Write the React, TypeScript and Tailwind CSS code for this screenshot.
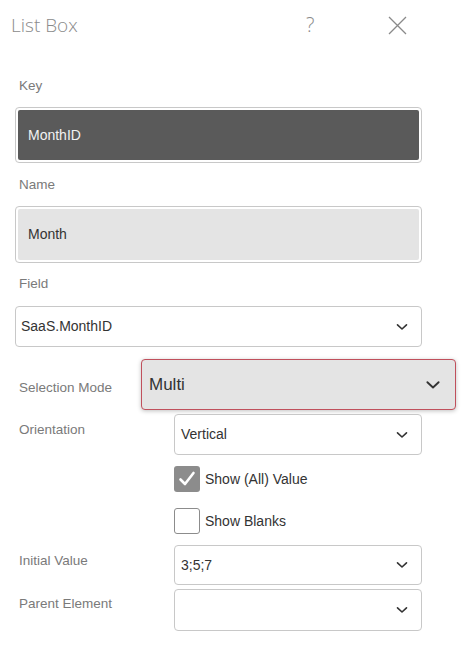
import React from 'react';

const Chevron = ({ big = false }: { big?: boolean }) => (
  <svg
    width={big ? 16 : 12}
    height={big ? 10 : 8}
    viewBox="0 0 12 8"
    fill="none"
    stroke="#333333"
    strokeWidth={big ? 1.5 : 1.6}
    strokeLinecap="round"
    strokeLinejoin="round"
  >
    <path d="M1.5 1.8 L6 6 L10.5 1.8" />
  </svg>
);

const Label = ({ children, className = '' }: { children: React.ReactNode; className?: string }) => (
  <div className={`pl-[4px] text-[13.5px] leading-[16px] text-[#7a7a7a] ${className}`}>{children}</div>
);

const Select = ({ value, className = '' }: { value: string; className?: string }) => (
  <div
    className={`flex items-center justify-between border border-[#c8c8c8] rounded-[4px] bg-white pr-[13px] text-[14px] text-[#333333] ${className}`}
  >
    <span>{value}</span>
    <Chevron />
  </div>
);

const Checkbox = ({ checked, label }: { checked: boolean; label: string }) => (
  <div className="flex items-center gap-[5px] pl-[159px]">
    {checked ? (
      <div className="w-[26px] h-[26px] rounded-[3px] bg-[#8c8c8c] flex items-center justify-center">
        <svg width="18" height="16" viewBox="0 0 18 16" fill="none">
          <path d="M2.5 8.5 L7 13 L15.5 2" stroke="white" strokeWidth="2.6" strokeLinecap="round" strokeLinejoin="round" />
        </svg>
      </div>
    ) : (
      <div className="w-[26px] h-[26px] rounded-[3px] border border-[#8c8c8c] bg-white" />
    )}
    <span className="text-[14px] text-[#333333]">{label}</span>
  </div>
);

export default function App() {
  return (
    <div
      className="w-[462px] h-[650px] bg-white px-[15px] pt-[14px] overflow-hidden"
      style={{ fontFamily: '"Liberation Sans", Arial, sans-serif' }}
    >
      {/* header */}
      <div className="flex items-center h-[22px] -ml-[4px]">
        <div className="flex-1 text-[19px] font-light text-[#8a8a8a]" style={{ fontFamily: '"Open Sans", sans-serif' }}>
          List Box
        </div>
        <div className="w-[20px] text-[20px] font-light text-[#8a8a8a] mr-[62px]" style={{ fontFamily: '"Open Sans", sans-serif' }}>
          ?
        </div>
        <svg width="19" height="19" viewBox="0 0 19 19" className="mr-[40px]" stroke="#8a8a8a" strokeWidth="1.3">
          <path d="M1 1 L18 18 M18 1 L1 18" />
        </svg>
      </div>

      {/* key */}
      <Label className="mt-[42px]">Key</Label>
      <div className="mt-[13px] w-[407px] h-[56px] border border-[#c8c8c8] rounded-[4px] p-[2px]">
        <div className="h-full rounded-[2px] bg-[#5a5a5a] flex items-center pl-[10px] text-[14px] text-[#f2f2f2]">
          MonthID
        </div>
      </div>

      {/* name */}
      <Label className="mt-[14px]">Name</Label>
      <div className="mt-[13px] w-[407px] h-[57px] border border-[#c8c8c8] rounded-[4px] p-[2px]">
        <div className="h-full rounded-[2px] bg-[#e4e4e4] flex items-center pl-[10px] text-[14px] text-[#333333]">
          Month
        </div>
      </div>

      {/* field */}
      <Label className="mt-[13px]">Field</Label>
      <Select value="SaaS.MonthID" className="mt-[14px] w-[407px] h-[41px] pl-[5px]" />

      {/* selection mode */}
      <div className="mt-[12px] flex items-center">
        <Label className="w-[126px] shrink-0 pt-[6px]">Selection Mode</Label>
        <div className="w-[315px] shrink-0 h-[51px] flex items-center justify-between rounded-[4px] border border-[#c0505c] bg-[#e4e4e4] pl-[7px] pr-[14px] shadow-[0_1px_4px_rgba(0,0,0,0.25)] text-[17px] text-[#333333]">
          <span>Multi</span>
          <Chevron big />
        </div>
      </div>

      {/* orientation */}
      <div className="mt-[4px] flex items-start">
        <Label className="w-[159px] shrink-0 pt-[8px]">Orientation</Label>
        <Select value="Vertical" className="w-[248px] h-[41px] pl-[6px]" />
      </div>

      <div className="mt-[11px]">
        <Checkbox checked label="Show (All) Value" />
      </div>
      <div className="mt-[16px]">
        <Checkbox checked={false} label="Show Blanks" />
      </div>

      {/* initial value */}
      <div className="mt-[11px] flex items-start">
        <Label className="w-[159px] shrink-0 pt-[8px]">Initial Value</Label>
        <Select value="3;5;7" className="w-[248px] h-[40px] pl-[6px]" />
      </div>

      {/* parent element */}
      <div className="mt-[4px] flex items-start">
        <Label className="w-[159px] shrink-0 pt-[7px]">Parent Element</Label>
        <Select value="" className="w-[248px] h-[42px] pl-[6px]" />
      </div>
    </div>
  );
}
